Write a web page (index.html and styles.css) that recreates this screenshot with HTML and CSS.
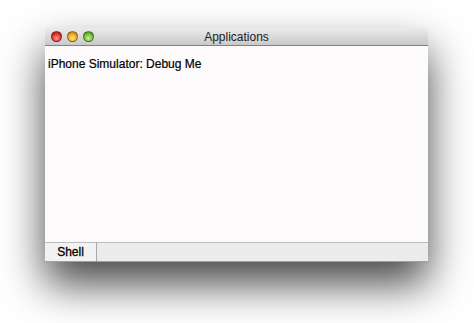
FILE: index.html
```html
<!DOCTYPE html>
<html lang="en">
<head>
    <meta charset="UTF-8">
    <title>Applications</title>
    <link rel="stylesheet" href="styles.css">
</head>
<body>
    <div class="window">
        <div class="titlebar">
            <div class="lights">
                <span class="light red"></span>
                <span class="light yellow"></span>
                <span class="light green"></span>
            </div>
            <div class="title">Applications</div>
        </div>
        <div class="content">
            <p class="line">iPhone Simulator: Debug Me</p>
        </div>
        <div class="tabs">
            <div class="tab">Shell</div>
        </div>
    </div>
</body>
</html>
```

FILE: styles.css
```css
html, body {
    height: 100%;
}
body {
    margin: 0;
    min-height: 323px;
    background: #fff;
    font-family: "Liberation Sans", Arial, sans-serif;
    font-size: 12px;
    color: #000;
    overflow: hidden;
}
.window {
    width: 383px;
    margin: 28px 0 0 45px;
    background: #fcfafa;
    box-shadow: 0 22px 40px rgba(0, 0, 0, 0.72);
}
.titlebar {
    position: relative;
    height: 17px;
    background: linear-gradient(#ebebeb, #c9c9c9);
    border-bottom: 1px solid #808080;
    display: flex;
    align-items: center;
    justify-content: center;
}
.lights {
    position: absolute;
    left: 6px;
    top: 3px;
    display: flex;
    gap: 5px;
}
.light {
    width: 11px;
    height: 11px;
    border-radius: 50%;
    box-sizing: border-box;
    border: 1px solid rgba(0, 0, 0, 0.35);
}
.red {
    background: radial-gradient(circle at 50% 70%, #ff9c94, #e0332b 55%, #a0150f);
}
.yellow {
    background: radial-gradient(circle at 50% 70%, #ffe28a, #e9a925 55%, #a26a0a);
}
.green {
    background: radial-gradient(circle at 50% 70%, #c5f59a, #71bd3c 55%, #3d7e15);
}
.title {
    color: #222;
    padding-top: 1px;
}
.content {
    height: 196px;
    padding: 0 3px;
}
.line {
    margin: 0;
    padding-top: 11px;
    -webkit-text-stroke: 0.2px #000;
}
.tabs {
    height: 18px;
    background: #ececec;
    border-top: 1px solid #bcbcbc;
    border-bottom: 1px solid #a0a0a0;
    display: flex;
}
.tab {
    width: 51px;
    background: #f2f2f2;
    border-right: 1px solid #a8a8a8;
    text-align: center;
    line-height: 18px;
    -webkit-text-stroke: 0.3px #000;
}
```
